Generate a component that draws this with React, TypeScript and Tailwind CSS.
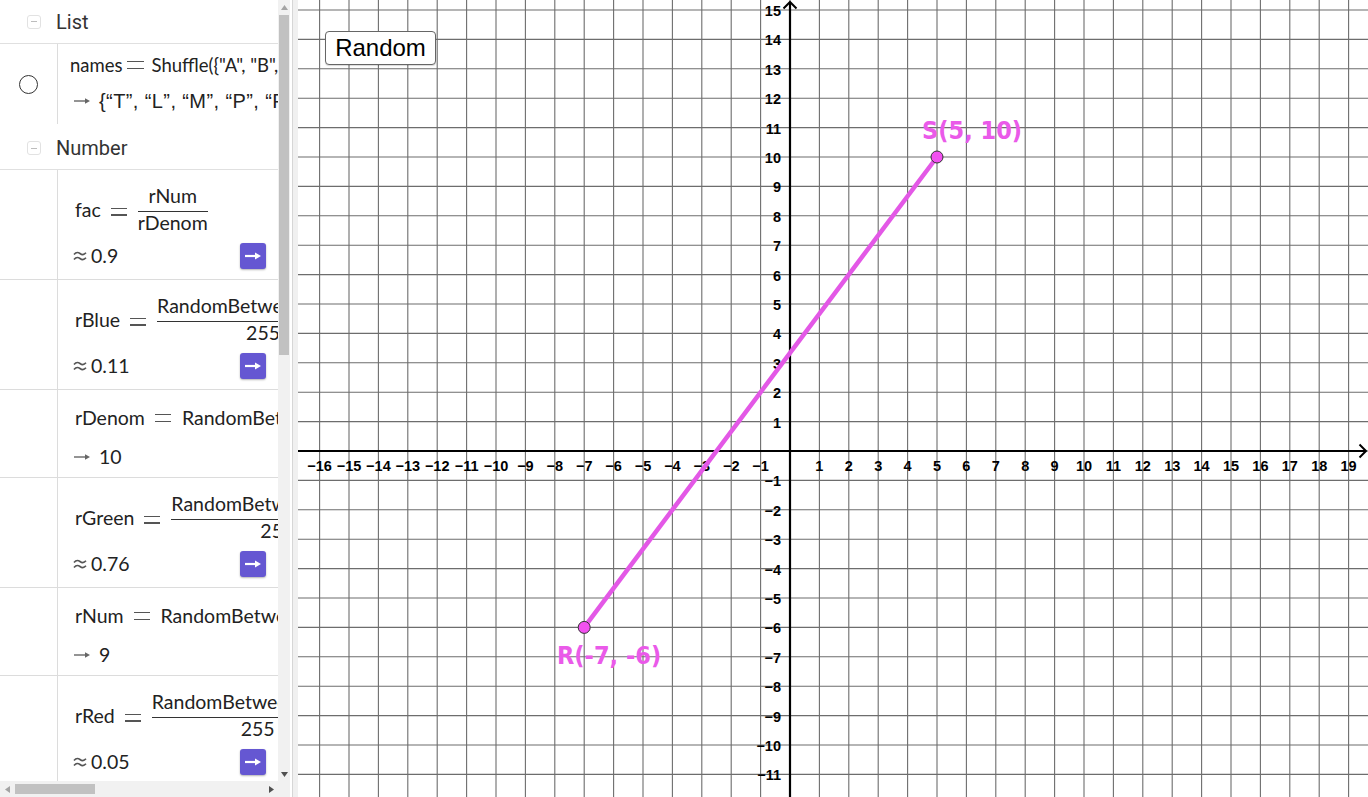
import React from 'react';

// graph geometry, in page pixels
const U = 29.4;
const OX = 790;
const OY = 451;
const gx = (x: number) => OX + x * U;
const gy = (y: number) => OY - y * U;
const range = (a: number, b: number) => Array.from({ length: b - a + 1 }, (_, i) => a + i);
const num = (n: number) => (n < 0 ? '\u2212' + -n : String(n));

const MATH = { fontFamily: 'Lato, "Noto Sans", sans-serif' };

const OutArrow = () => (
  <svg width="18" height="10" viewBox="0 0 18 10" className="ml-[1px] mr-[8px] shrink-0">
    <path d="M1 5H13" stroke="#666" strokeWidth="1.4" />
    <path d="M12 2.3L17 5L12 7.7Z" fill="#666" />
  </svg>
);

const Approx = () => (
  <svg width="14" height="12" viewBox="0 0 14 12" className="ml-[1px] mr-[4px] shrink-0">
    <path d="M1 4.5C3 2 5 2 7 3.5S11 5 13 2.8" stroke="#555" strokeWidth="1.6" fill="none" />
    <path d="M1 9.5C3 7 5 7 7 8.5S11 10 13 7.8" stroke="#555" strokeWidth="1.6" fill="none" />
  </svg>
);

const Eq = ({ className = '' }: { className?: string }) => (
  <span className={`inline-flex h-[20px] w-[16px] shrink-0 flex-col justify-center gap-[5.5px] ${className}`}>
    <span className="h-[1.3px] bg-[#555]" />
    <span className="h-[1.3px] bg-[#555]" />
  </span>
);

const PurpleButton = () => (
  <div className="flex h-[26px] w-[26px] items-center justify-center rounded-[3px] bg-[#6557d2] shadow-[0_1px_2px_rgba(0,0,0,0.3)]">
    <svg width="18" height="10" viewBox="0 0 18 10">
      <path d="M1 5H12" stroke="#fff" strokeWidth="2.2" />
      <path d="M11 1.5L17 5L11 8.5Z" fill="#fff" />
    </svg>
  </div>
);

const Collapse = () => (
  <div className="flex h-[14px] w-[14px] items-center justify-center rounded-[3px] border border-[#e2e2e2]">
    <div className="h-px w-[6px] bg-[#bdbdbd]" />
  </div>
);

const GroupHeader = ({ label, className }: { label: string; className: string }) => (
  <div className={`flex items-center border-b border-[#e0e0e0] ${className}`}>
    <div className="flex w-[56px] shrink-0 pl-[27px]">
      <Collapse />
    </div>
    <span className="text-[20px] text-[#333]" style={{ fontFamily: 'Roboto, "Liberation Sans", sans-serif' }}>
      {label}
    </span>
  </div>
);

const Fraction = ({ top, bottom }: { top: string; bottom: string }) => (
  <div className="inline-flex shrink-0 flex-col items-center">
    <div className="h-[20px] whitespace-nowrap leading-[20px]">{top}</div>
    <div className="mt-[5px] h-[1.3px] w-full bg-[#333]" />
    <div className="mt-[1px] h-[20px] whitespace-nowrap leading-[20px]">{bottom}</div>
  </div>
);

const ValueRow = ({ value }: { value: string }) => (
  <div className="mt-[10px] flex h-[26px] items-center justify-between pr-[12px]">
    <span className="flex items-center leading-[20px]">
      <Approx />
      {value}
    </span>
    <PurpleButton />
  </div>
);

const Item = ({ children, h }: { children: React.ReactNode; h: string }) => (
  <div className={`flex ${h} border-b border-[#dcdcdc]`}>
    <div className="w-[58px] shrink-0 border-r border-[#dcdcdc]" />
    <div className="min-w-0 flex-1 overflow-hidden pl-[14px]">{children}</div>
  </div>
);

const FracItem = ({ name, top, bottom, value }: { name: string; top: string; bottom: string; value: string }) => (
  <Item h="h-[110px]">
    <div className="pt-[16px]">
      <div className="ml-[3px] flex items-center whitespace-nowrap">
        <span>{name}</span>
        <Eq className="ml-[10px] mr-[11px] mt-[4px]" />
        <Fraction top={top} bottom={bottom} />
      </div>
      <ValueRow value={value} />
    </div>
  </Item>
);

const PlainItem = ({ name, def, value }: { name: string; def: string; value: string }) => (
  <Item h="h-[88px]">
    <div className="pt-[18px]">
      <div className="ml-[3px] flex h-[20px] items-center whitespace-nowrap leading-[20px]">
        {name}
        <Eq className="ml-[10px] mr-[11px]" />
        {def}
      </div>
      <div className="mt-[19px] flex h-[20px] items-center leading-[20px]">
        <OutArrow />
        {value}
      </div>
    </div>
  </Item>
);

function AlgebraView() {
  return (
    <div className="flex h-full w-[290px] shrink-0 flex-col">
      <div className="flex min-h-0 flex-1">
        <div className="min-w-0 flex-1 overflow-hidden text-[19.5px] text-[#222]" style={MATH}>
          <GroupHeader label="List" className="h-[44px]" />
          <div className="flex h-[80px]">
            <div className="flex w-[58px] shrink-0 items-center justify-center border-r border-[#dcdcdc]">
              <div className="h-[19px] w-[19px] rounded-full border border-[#333] bg-white" />
            </div>
            <div className="min-w-0 flex-1 overflow-hidden pl-[14px] pt-[11px]">
              <div className="-ml-[2px] flex h-[20px] items-center whitespace-nowrap text-[18.5px] leading-[20px]">
                names
                <Eq className="ml-[4px] mr-[8px] w-[17px]" />
                Shuffle({'{'}"A", "B", "C", "D", "E", "F"{'}'})
              </div>
              <div
                className="mt-[16px] flex h-[20px] items-center whitespace-nowrap text-[20px] leading-[20px] tracking-[0.4px]"
                style={{ fontFamily: '"Liberation Sans", Arial, sans-serif' }}
              >
                <OutArrow />
                {'{'}“T”, “L”, “M”, “P”, “F”, “A”, “B”{'}'}
              </div>
            </div>
          </div>
          <GroupHeader label="Number" className="h-[46px] pt-[3px]" />
          <FracItem name="fac" top="rNum" bottom="rDenom" value="0.9" />
          <FracItem name="rBlue" top="RandomBetween(0, 255)" bottom="255" value="0.11" />
          <PlainItem name="rDenom" def="RandomBetween(1, 10)" value="10" />
          <FracItem name="rGreen" top="RandomBetween(0, 255)" bottom="255" value="0.76" />
          <PlainItem name="rNum" def="RandomBetween(1, rDenom)" value="9" />
          <FracItem name="rRed" top="RandomBetween(0, 255)" bottom="255" value="0.05" />
        </div>
        {/* vertical scrollbar */}
        <div className="flex w-[12px] shrink-0 flex-col bg-[#f1f1f1]">
          <div className="flex h-[14px] items-center justify-center">
            <svg width="7" height="5" viewBox="0 0 7 5"><path d="M0 5L3.5 0L7 5Z" fill="#a3a3a3" /></svg>
          </div>
          <div className="flex-1 px-[1px] pt-[1px]">
            <div className="h-[340px] bg-[#c1c1c1]" />
          </div>
          <div className="flex h-[14px] items-center justify-center">
            <svg width="7" height="5" viewBox="0 0 7 5"><path d="M0 0L3.5 5L7 0Z" fill="#505050" /></svg>
          </div>
        </div>
      </div>
      {/* horizontal scrollbar */}
      <div className="flex h-[16px] shrink-0">
        <div className="flex flex-1 bg-[#f1f1f1]">
          <div className="flex w-[14px] items-center justify-center">
            <svg width="5" height="7" viewBox="0 0 5 7"><path d="M5 0L0 3.5L5 7Z" fill="#a3a3a3" /></svg>
          </div>
          <div className="flex-1 py-[3px] pl-[1px]">
            <div className="h-full w-[80px] bg-[#c1c1c1]" />
          </div>
          <div className="flex w-[14px] items-center justify-center">
            <svg width="5" height="7" viewBox="0 0 5 7"><path d="M0 0L5 3.5L0 7Z" fill="#505050" /></svg>
          </div>
        </div>
        <div className="w-[12px] bg-[#f1f1f1]" />
      </div>
    </div>
  );
}

function Graph() {
  const xs = range(-16, 19);
  const ys = range(-12, 15);
  const R = { x: gx(-7), y: gy(-6) };
  const S = { x: gx(5), y: gy(10) };
  return (
    <div className="relative min-w-0 flex-1 bg-white">
      <svg width="1070" height="797" viewBox="298 0 1070 797" className="block">
        <g stroke="#6d6d6d" strokeWidth="1.1">
          {xs.map((k) => (
            <line key={'v' + k} x1={gx(k)} y1={0} x2={gx(k)} y2={797} />
          ))}
          {ys.map((k) => (
            <line key={'h' + k} x1={298} y1={gy(k)} x2={1368} y2={gy(k)} />
          ))}
        </g>
        <g stroke="#000" strokeWidth="2.2" fill="none">
          <line x1={298} y1={OY} x2={1366} y2={OY} />
          <path d="M1359.5 444.5L1366 451L1359.5 457.5" strokeWidth="2" />
          <line x1={OX} y1={797} x2={OX} y2={2} />
          <path d="M783.5 8.5L790 2L796.5 8.5" strokeWidth="2" />
        </g>
        <g fontFamily='"Liberation Sans", Arial, sans-serif' fontWeight="bold" fontSize="14.5" fill="#000">
          {xs
            .filter((k) => k !== 0)
            .map((k) => (
              <text key={'xl' + k} x={gx(k)} y={471} textAnchor="middle">
                {num(k)}
              </text>
            ))}
          {range(-11, 15)
            .filter((k) => k !== 0)
            .map((k) => (
              <text key={'yl' + k} x={781} y={gy(k) + 6} textAnchor="end">
                {num(k)}
              </text>
            ))}
        </g>
        <line x1={R.x} y1={R.y} x2={S.x} y2={S.y} stroke="#e358e6" strokeWidth="4.5" strokeLinecap="round" />
        <circle cx={R.x} cy={R.y} r="6" fill="#f250f0" stroke="#333" strokeWidth="1" />
        <circle cx={S.x} cy={S.y} r="6" fill="#f250f0" stroke="#333" strokeWidth="1" />
        <g
          fontFamily='"DejaVu Sans Condensed", "DejaVu Sans", sans-serif'
          fontWeight="bold"
          fontSize="25"
          fill="#ea5ae9"
          style={{ fontStretch: 'condensed' }}
        >
          <text x={922} y={139}>S(5, 10)</text>
          <text x={557} y={664}>R(-7, -6)</text>
        </g>
      </svg>
      <button
        className="absolute left-[27px] top-[31px] flex h-[34px] w-[111px] items-center justify-center rounded-[4px] border border-[#666] bg-white text-[24px] leading-none text-black shadow-[0_1px_1px_rgba(0,0,0,0.15)]"
        style={{ fontFamily: '"Liberation Sans", Arial, sans-serif' }}
      >
        Random
      </button>
    </div>
  );
}

export default function App() {
  return (
    <div className="flex h-[797px] w-[1368px] overflow-hidden bg-white">
      <AlgebraView />
      <div className="flex w-[8px] shrink-0">
        <div className="w-[2px] bg-white" />
        <div className="w-px bg-[#d6d6d6]" />
        <div className="flex-1 bg-[#f0f0f0]" />
      </div>
      <Graph />
    </div>
  );
}
